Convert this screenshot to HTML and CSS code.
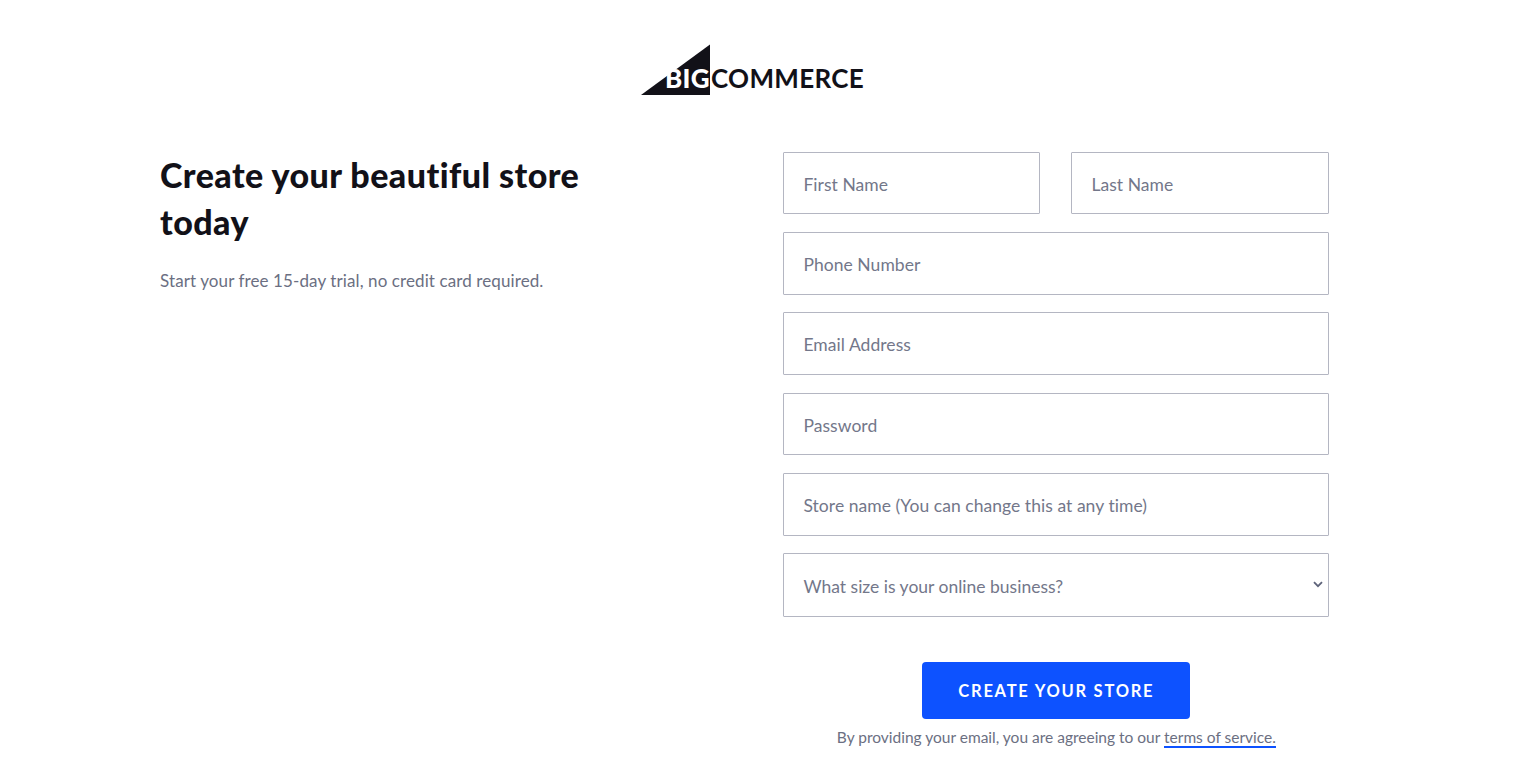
FILE: index.html
```html
<!DOCTYPE html>
<html lang="en">
<head>
<meta charset="utf-8">
<title>BigCommerce - Create your store</title>
<link rel="stylesheet" href="styles.css">
</head>
<body>
<header class="header">
  <div class="logo">
    <svg class="logo-mark" width="70" height="51" viewBox="0 0 70 51" aria-hidden="true"><polygon points="0,51 69,0.5 69,51" fill="#121118"/></svg>
    <span class="logo-big">BIG</span>
    <span class="logo-commerce">COMMERCE</span>
  </div>
</header>
<main class="main">
  <section class="intro">
    <h1 class="title">Create your beautiful store today</h1>
    <p class="lead">Start your free 15-day trial, no credit card required.</p>
  </section>
  <form class="form">
    <div class="row">
      <input class="field" type="text" placeholder="First Name">
      <input class="field" type="text" placeholder="Last Name">
    </div>
    <input class="field" type="text" placeholder="Phone Number">
    <input class="field" type="text" placeholder="Email Address">
    <input class="field" type="text" placeholder="Password">
    <input class="field" type="text" placeholder="Store name (You can change this at any time)">
    <div class="select-wrap">
      <div class="field select">What size is your online business?</div>
      <svg class="chevron" width="10" height="7" viewBox="0 0 10 7" aria-hidden="true"><path d="M1 1.2 5 5.2 9 1.2" fill="none" stroke="#5e637a" stroke-width="1.8"/></svg>
    </div>
    <div class="submit">
      <button class="button" type="button">CREATE YOUR STORE</button>
      <p class="terms">By providing your email, you are agreeing to our <a class="terms-link" href="#">terms of service.</a></p>
    </div>
  </form>
</main>
</body>
</html>
```
FILE: styles.css
```css
* { box-sizing: border-box; }
html, body { margin: 0; padding: 0; background: #fff; }
body { font-family: "Lato", "Liberation Sans", sans-serif; font-variant-ligatures: none; color: #313440; overflow: hidden; height: 771px; }

.header { display: flex; justify-content: flex-start; padding: 44px 0 0 641px; height: 151.6px; }
.logo { position: relative; width: 224px; height: 52px; }
.logo-mark { display: block; position: absolute; left: 0; top: 0; }
.logo-big { position: absolute; left: 24px; top: 20px; font: 900 26px/28px "Lato", sans-serif; color: #fff; letter-spacing: 0.3px; }
.logo-commerce { position: absolute; left: 70px; top: 20px; font: 700 26px/28px "Lato", sans-serif; color: #121118; letter-spacing: 0.3px; }

.main { display: flex; padding: 0 206.7px 0 160px; justify-content: space-between; }
.intro { width: 440px; }
.title { margin: -1px 0 0; font: 900 34px/47px "Lato", "Liberation Sans", sans-serif; font-variant-ligatures: none; letter-spacing: 0.45px; color: #121118; }
.lead { margin: 24px 0 0; font-size: 17px; line-height: 24px; letter-spacing: 0.1px; color: #6b6f82; }

.form { width: 545.9px; display: flex; flex-direction: column; gap: 17.48px; }
.row { display: flex; gap: 31px; }
.row .field { flex: 1 1 0; min-width: 0; }
.row .field:first-child { flex: 0 0 257px; }
.field { display: block; width: 100%; height: 62.87px; border: 1px solid #b4b6c2; border-radius: 1px; background: #fff; padding: 2px 19px 0; font: 400 17.5px "Lato", sans-serif; font-variant-ligatures: none; letter-spacing: 0.05px; color: #73778a; outline: none; }
.field::placeholder { color: #73778a; opacity: 1; }
.select-wrap { position: relative; }
.select { height: 64px; display: flex; align-items: center; letter-spacing: 0; }
.chevron { position: absolute; right: 6px; top: 28px; }

.submit { display: flex; flex-direction: column; align-items: center; margin-top: 27.3px; }
.button { width: 268px; height: 57px; border: 0; border-radius: 4px; background: #0d52ff; color: #fff; font: 700 16.5px "Lato", sans-serif; letter-spacing: 1.75px; }
.terms { margin: 8px 0 0; font-size: 15.5px; line-height: 20px; color: #6b6f82; }
.terms-link { color: #6b6f82; text-decoration: none; border-bottom: 2px solid #0d52ff; }
```
